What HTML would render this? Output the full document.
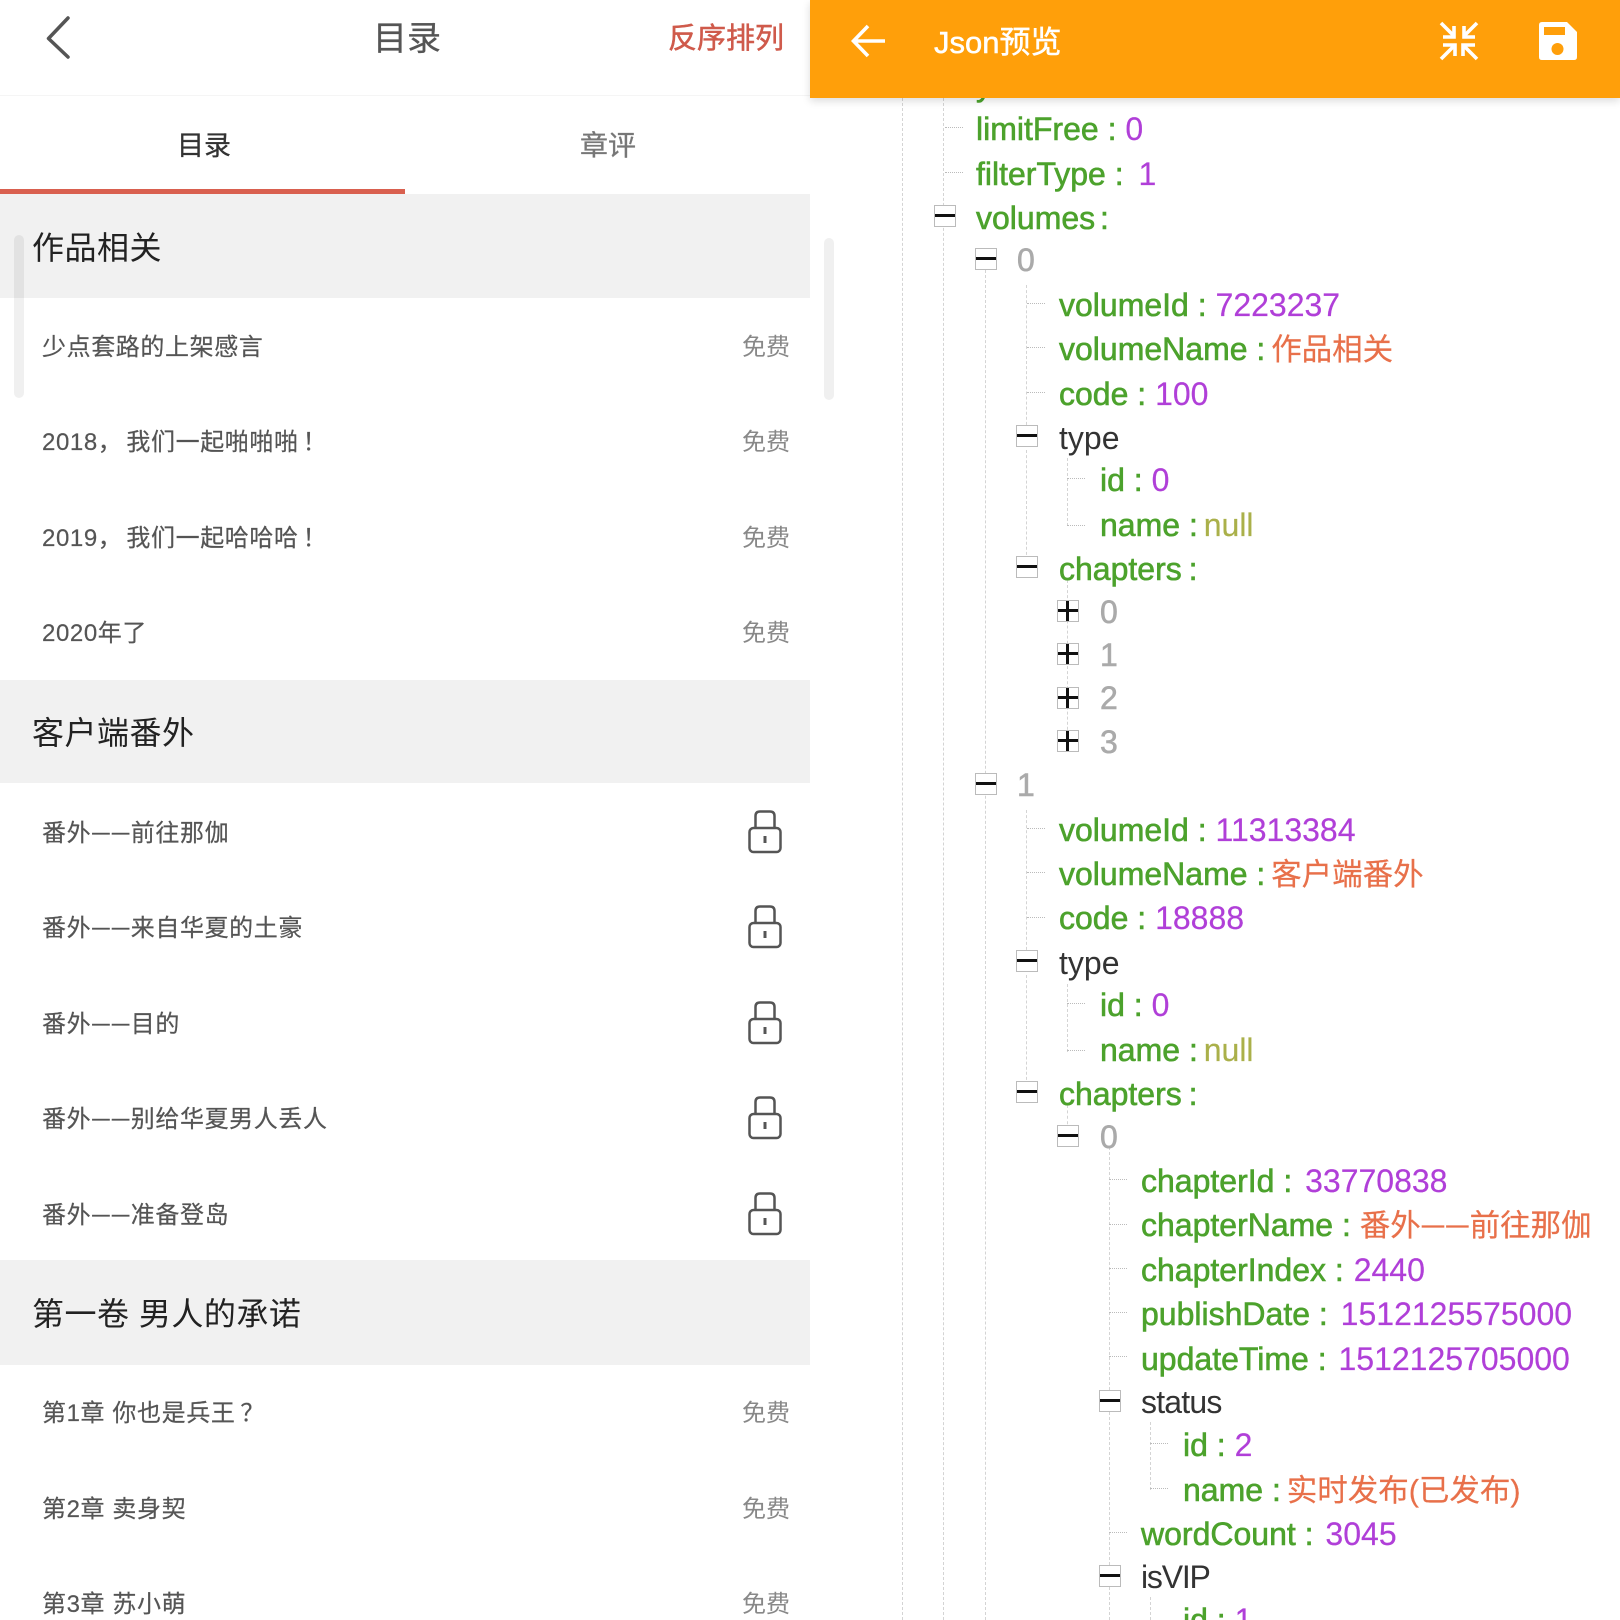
<!DOCTYPE html>
<html lang="zh"><head><meta charset="utf-8"><title>目录</title>
<style>
html,body{margin:0;padding:0;background:#fff}
#p{position:relative;width:1620px;height:1620px;overflow:hidden;background:#fff;font-family:"Liberation Sans","WenQuanYi Zen Hei","Noto Sans CJK SC",sans-serif}
#p div{position:absolute;white-space:nowrap}
.sec{left:0;width:810px;background:#f1f1f1}
.st{left:32px;font-size:32px;line-height:40px;color:#222;letter-spacing:.5px}
.it{left:42px;font-size:24px;line-height:40px;color:#555;letter-spacing:.6px;-webkit-text-stroke:.2px #555}
.fr{left:742px;font-size:24px;line-height:40px;color:#888}
.r{font-size:32px;line-height:40px;color:#4ca22c;-webkit-text-stroke:.6px}
.r i{font-style:normal;color:#b03fd8;-webkit-text-stroke:.2px}
.r b{font-weight:normal;color:#e8704a;font-size:30.500px;margin-left:-3px;-webkit-text-stroke:.2px}
.r u{text-decoration:none;color:#aab04a;margin-left:-3px;-webkit-text-stroke:.2px}
s{text-decoration:none;font-size:.8em}
.g{color:#aaa}.k{color:#333;-webkit-text-stroke:0}
.box{width:20px;height:20px;border:1px solid #bbb;background:#fff;z-index:2}
.box:before{content:"";position:absolute;left:0;right:0;top:8px;height:3px;background:#111}
.pl:after{content:"";position:absolute;left:8px;top:0;bottom:0;width:3px;background:#111}
.v{width:0;border-left:1px dashed #d4d4d4}
.h{height:0;width:18px;border-top:1px dotted #bbb}
</style></head><body><div id="p">

<svg style="position:absolute;left:44px;top:15px" width="30" height="46" viewBox="0 0 30 46"><path d="M24 3 L4.500 23.500 L24 42" fill="none" stroke="#555" stroke-width="3.500" stroke-linecap="round" stroke-linejoin="round"/></svg>
<div style="left:373px;top:19px;font-size:34px;line-height:40px;color:#555;-webkit-text-stroke:.3px">目录</div>
<div style="left:668px;top:19px;font-size:29px;line-height:40px;color:#cf5a4b;-webkit-text-stroke:.5px">反序排列</div>
<div style="left:0;top:95px;width:810px;height:1px;background:#f5f5f5"></div>
<div style="left:177px;top:126px;font-size:27px;line-height:40px;color:#333;-webkit-text-stroke:.3px">目录</div>
<div style="left:580px;top:126px;font-size:28px;line-height:40px;color:#777;-webkit-text-stroke:.3px">章评</div>
<div style="left:0;top:189px;width:405px;height:5px;background:#d9604f"></div>

<div class="sec" style="top:194px;height:104px"></div>
<div class="st" style="top:228px">作品相关</div>
<div class="it" style="top:328px">少点套路的上架感言</div><div class="fr" style="top:328px">免费</div>
<div class="it" style="top:423px">2018<span style="margin-right:4px">，</span>我们一起啪啪啪<span style="margin-left:4px">！</span></div><div class="fr" style="top:423px">免费</div>
<div class="it" style="top:519px">2019<span style="margin-right:4px">，</span>我们一起哈哈哈<span style="margin-left:4px">！</span></div><div class="fr" style="top:519px">免费</div>
<div class="it" style="top:614px">2020年了</div><div class="fr" style="top:614px">免费</div>

<div class="sec" style="top:680px;height:103px"></div>
<div class="st" style="top:713px">客户端番外</div>
<div class="it" style="top:814px">番外<s>一一</s>前往那伽</div>
<div class="it" style="top:909px">番外<s>一一</s>来自华夏的土豪</div>
<div class="it" style="top:1005px">番外<s>一一</s>目的</div>
<div class="it" style="top:1100px">番外<s>一一</s>别给华夏男人丢人</div>
<div class="it" style="top:1196px">番外<s>一一</s>准备登岛</div>

<svg width="0" height="0" style="position:absolute"><defs><g id="lock" fill="none" stroke="#555" stroke-width="2.500"><path d="M9.500 20 V8 Q9.500 3.500 14 3.500 H24 Q28.500 3.500 28.500 8 V20"/><rect x="3.500" y="20" width="31" height="24" rx="4"/><path d="M19 28 V35" stroke-width="3"/></g></defs></svg>
<svg style="position:absolute;left:746px;top:808px" width="38" height="46"><use href="#lock"/></svg>
<svg style="position:absolute;left:746px;top:903px" width="38" height="46"><use href="#lock"/></svg>
<svg style="position:absolute;left:746px;top:999px" width="38" height="46"><use href="#lock"/></svg>
<svg style="position:absolute;left:746px;top:1094px" width="38" height="46"><use href="#lock"/></svg>
<svg style="position:absolute;left:746px;top:1190px" width="38" height="46"><use href="#lock"/></svg>

<div class="sec" style="top:1260px;height:105px"></div>
<div class="st" style="top:1294px">第一卷 男人的承诺</div>
<div class="it" style="top:1394px">第1章 你也是兵王<span style="margin-left:5px">？</span></div><div class="fr" style="top:1394px">免费</div>
<div class="it" style="top:1490px">第2章 卖身契</div><div class="fr" style="top:1490px">免费</div>
<div class="it" style="top:1585px">第3章 苏小萌</div><div class="fr" style="top:1585px">免费</div>

<div style="left:14px;top:235px;width:10px;height:163px;background:rgba(0,0,0,.06);border-radius:5px"></div>
<div style="left:824px;top:238px;width:10px;height:162px;background:#f0f0f0;border-radius:5px"></div>

<!-- tree lines -->
<div class="v" style="left:902px;top:98px;height:1522px"></div>
<div class="v" style="left:943px;top:98px;height:1522px"></div>
<div class="v" style="left:985px;top:270px;height:1350px"></div>
<div class="v" style="left:1026px;top:285px;height:150px"></div>
<div class="v" style="left:1026px;top:450px;height:110px"></div>
<div class="v" style="left:1067px;top:458px;height:68px"></div>
<div class="v" style="left:1067px;top:580px;height:170px"></div>
<div class="v" style="left:1026px;top:810px;height:145px"></div>
<div class="v" style="left:1026px;top:975px;height:110px"></div>
<div class="v" style="left:1067px;top:984px;height:68px"></div>
<div class="v" style="left:1067px;top:1105px;height:30px"></div>
<div class="v" style="left:1109px;top:1147px;height:473px"></div>
<div class="v" style="left:1150px;top:1422px;height:68px"></div>
<div class="v" style="left:1150px;top:1597px;height:23px"></div>

<div class="h" style="left:945px;top:127px"></div>
<div class="h" style="left:945px;top:172px"></div>
<div class="h" style="left:1027px;top:303px"></div>
<div class="h" style="left:1027px;top:347px"></div>
<div class="h" style="left:1027px;top:392px"></div>
<div class="h" style="left:1067px;top:478px"></div>
<div class="h" style="left:1067px;top:525px"></div>
<div class="h" style="left:1027px;top:828px"></div>
<div class="h" style="left:1027px;top:872px"></div>
<div class="h" style="left:1027px;top:917px"></div>
<div class="h" style="left:1067px;top:1003px"></div>
<div class="h" style="left:1067px;top:1050px"></div>
<div class="h" style="left:1109px;top:1179px"></div>
<div class="h" style="left:1109px;top:1224px"></div>
<div class="h" style="left:1109px;top:1268px"></div>
<div class="h" style="left:1109px;top:1312px"></div>
<div class="h" style="left:1109px;top:1356px"></div>
<div class="h" style="left:1150px;top:1443px"></div>
<div class="h" style="left:1150px;top:1488px"></div>
<div class="h" style="left:1109px;top:1532px"></div>

<!-- boxes -->
<div class="box" style="left:934px;top:205px"></div>
<div class="box" style="left:975px;top:248px"></div>
<div class="box" style="left:1016px;top:425px"></div>
<div class="box" style="left:1016px;top:556px"></div>
<div class="box pl" style="left:1057px;top:600px"></div>
<div class="box pl" style="left:1057px;top:643px"></div>
<div class="box pl" style="left:1057px;top:687px"></div>
<div class="box pl" style="left:1057px;top:730px"></div>
<div class="box" style="left:975px;top:773px"></div>
<div class="box" style="left:1016px;top:950px"></div>
<div class="box" style="left:1016px;top:1081px"></div>
<div class="box" style="left:1057px;top:1125px"></div>
<div class="box" style="left:1099px;top:1390px"></div>
<div class="box" style="left:1099px;top:1565px"></div>

<!-- rows -->
<div class="r" style="left:976px;top:65px">y</div>
<div class="r" style="left:976px;top:109px">limitFree : <i>0</i></div>
<div class="r" style="left:976px;top:154px">filterType : <i style="margin-left:6px">1</i></div>
<div class="r" style="left:976px;top:198px;word-spacing:-4px">volumes :</div>
<div class="r g" style="left:1017px;top:240px">0</div>
<div class="r" style="left:1059px;top:285px">volumeId : <i>7223237</i></div>
<div class="r" style="left:1059px;top:329px">volumeName : <b>作品相关</b></div>
<div class="r" style="left:1059px;top:374px">code : <i>100</i></div>
<div class="r k" style="left:1059px;top:418px">type</div>
<div class="r" style="left:1100px;top:460px">id : <i>0</i></div>
<div class="r" style="left:1100px;top:505px">name : <u>null</u></div>
<div class="r" style="left:1059px;top:549px;word-spacing:-2px">chapters :</div>
<div class="r g" style="left:1100px;top:592px">0</div>
<div class="r g" style="left:1100px;top:635px">1</div>
<div class="r g" style="left:1100px;top:678px">2</div>
<div class="r g" style="left:1100px;top:722px">3</div>
<div class="r g" style="left:1017px;top:765px">1</div>
<div class="r" style="left:1059px;top:810px">volumeId : <i>11313384</i></div>
<div class="r" style="left:1059px;top:854px">volumeName : <b>客户端番外</b></div>
<div class="r" style="left:1059px;top:898px">code : <i>18888</i></div>
<div class="r k" style="left:1059px;top:943px">type</div>
<div class="r" style="left:1100px;top:985px">id : <i>0</i></div>
<div class="r" style="left:1100px;top:1030px">name : <u>null</u></div>
<div class="r" style="left:1059px;top:1074px;word-spacing:-2px">chapters :</div>
<div class="r g" style="left:1100px;top:1117px">0</div>
<div class="r" style="left:1141px;top:1161px">chapterId : <i style="margin-left:4px">33770838</i></div>
<div class="r" style="left:1141px;top:1205px">chapterName : <b style="margin-left:0">番外<s>一一</s>前往那伽</b></div>
<div class="r" style="left:1141px;top:1250px">chapterIndex : <i style="margin-left:1px">2440</i></div>
<div class="r" style="left:1141px;top:1294px">publishDate : <i style="margin-left:4px">1512125575000</i></div>
<div class="r" style="left:1141px;top:1339px">updateTime : <i style="margin-left:3px">1512125705000</i></div>
<div class="r k" style="left:1141px;top:1382px;letter-spacing:-.8px">status</div>
<div class="r" style="left:1183px;top:1425px">id : <i>2</i></div>
<div class="r" style="left:1183px;top:1470px">name : <b>实时发布(已发布)</b></div>
<div class="r" style="left:1141px;top:1514px">wordCount : <i style="margin-left:3px">3045</i></div>
<div class="r k" style="left:1141px;top:1557px;letter-spacing:-1.200px">isVIP</div>
<div class="r" style="left:1183px;top:1600px">id : <i>1</i></div>

<!-- header -->
<div style="left:810px;top:0;width:810px;height:98px;background:#ff9f0a;box-shadow:0 3px 8px rgba(0,0,0,.14);z-index:3"></div>
<svg style="position:absolute;left:850px;top:22px;z-index:4" width="38" height="38" viewBox="0 0 38 38"><path d="M35 19 H4 M18 4 L3.500 19 L18 34" fill="none" stroke="#fff" stroke-width="3.600"/></svg>
<div style="left:934px;top:23px;font-size:31px;line-height:40px;color:#fff;z-index:4;-webkit-text-stroke:.5px">Json预览</div>
<svg style="position:absolute;left:1439px;top:21px;z-index:4" width="40" height="40" viewBox="0 0 40 40"><path d="M2 2 L15 15 M15 5 V16 H4 M38 2 L25 15 M25 5 V16 H36 M2 38 L15 25 M4 24 H16 V35 M38 38 L25 25 M36 24 H24 V35" fill="none" stroke="#fff" stroke-width="3.600"/></svg>
<svg style="position:absolute;left:1539px;top:22px;z-index:4" width="38" height="38" viewBox="0 0 38 38"><path fill-rule="evenodd" fill="#fff" d="M3 0 H28 L38 10 V35 Q38 38 35 38 H3 Q0 38 0 35 V3 Q0 0 3 0 Z M5 5 V13 H26 V5 Z"/><circle cx="18.500" cy="27" r="6" fill="#ff9f0a"/></svg>

</div></body></html>
